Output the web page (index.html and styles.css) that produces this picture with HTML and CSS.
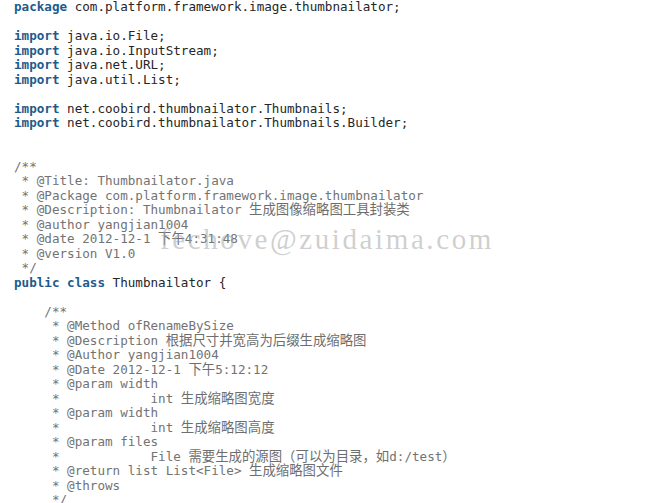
FILE: index.html
```html
<!DOCTYPE html>
<html>
  <head>
    <meta charset="UTF-8" />
    <title>Thumbnailator.java</title>
    <link rel="stylesheet" href="styles.css">
  </head>
  <body>
    <div class="code">
      <div class="line"><span class="kw">package</span> com.platform.framework.image.thumbnailator;</div>
      <div class="line"></div>
      <div class="line"><span class="kw">import</span> java.io.File;</div>
      <div class="line"><span class="kw">import</span> java.io.InputStream;</div>
      <div class="line"><span class="kw">import</span> java.net.URL;</div>
      <div class="line"><span class="kw">import</span> java.util.List;</div>
      <div class="line"></div>
      <div class="line"><span class="kw">import</span> net.coobird.thumbnailator.Thumbnails;</div>
      <div class="line"><span class="kw">import</span> net.coobird.thumbnailator.Thumbnails.Builder;</div>
      <div class="line"></div>
      <div class="line"></div>
      <div class="line cm">/**</div>
      <div class="line cm"> * @Title: Thumbnailator.java</div>
      <div class="line cm"> * @Package com.platform.framework.image.thumbnailator</div>
      <div class="line cm"> * @Description: Thumbnailator <span class="zh">生成图像缩略图工具封装类</span></div>
      <div class="line cm"> * @author yangjian1004</div>
      <div class="line cm"> * @date 2012-12-1 <span class="zh">下午</span>4:31:48</div>
      <div class="line cm"> * @version V1.0</div>
      <div class="line cm"> */</div>
      <div class="line"><span class="kw">public</span> <span class="kw">class</span> Thumbnailator {</div>
      <div class="line"></div>
      <div class="line cm">    /**</div>
      <div class="line cm">     * @Method ofRenameBySize</div>
      <div class="line cm">     * @Description <span class="zh">根据尺寸并宽高为后缀生成缩略图</span></div>
      <div class="line cm">     * @Author yangjian1004</div>
      <div class="line cm">     * @Date 2012-12-1 <span class="zh">下午</span>5:12:12</div>
      <div class="line cm">     * @param width</div>
      <div class="line cm">     *            int <span class="zh">生成缩略图宽度</span></div>
      <div class="line cm">     * @param width</div>
      <div class="line cm">     *            int <span class="zh">生成缩略图高度</span></div>
      <div class="line cm">     * @param files</div>
      <div class="line cm">     *            File <span class="zh">需要生成的源图（可以为目录，如</span>d:/test<span class="zh">）</span></div>
      <div class="line cm">     * @return list List&lt;File&gt; <span class="zh">生成缩略图文件</span></div>
      <div class="line cm">     * @throws</div>
      <div class="line cm">     */</div>
    </div>

    <div class="watermark">fechove@zuidaima.com</div>
  </body>
</html>
```

FILE: styles.css
```css
* {
  margin: 0;
  padding: 0;
  box-sizing: border-box;
}

body {
  position: relative;
  height: 503px;
  background-color: #ffffff;
  overflow: hidden;
  font-family: "DejaVu Sans Mono", "Liberation Mono", monospace;
  color: #262626;
}

.code {
  padding-left: 14px;
  font-size: 12.6px;
}

.line {
  height: 14.5px;
  line-height: 14.5px;
  white-space: pre;
}

.kw {
  color: #1e5a8c;
  font-weight: bold;
}

.cm {
  color: #737373;
}

/* keep the taller CJK glyphs from pushing the line down */
.zh {
  font-family: "Noto Sans CJK SC", sans-serif;
  font-size: 13.4px;
  line-height: 0;
  color: #6e6e6e;
}

/* site watermark laid over the code */
.watermark {
  position: absolute;
  left: 160px;
  top: 223px;
  font-family: "Liberation Serif", serif;
  font-size: 29px;
  letter-spacing: 2.6px;
  color: rgba(160, 160, 160, 0.5);
  pointer-events: none;
}
```
